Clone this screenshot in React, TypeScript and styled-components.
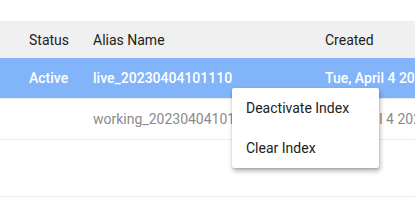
import React from "react";
import styled, { createGlobalStyle } from "styled-components";

const GlobalStyle = createGlobalStyle`
  html, body {
    margin: 0;
    padding: 0;
    background: #ffffff;
    overflow: hidden;
  }
  body {
    font-family: Roboto, "Liberation Sans", Arial, sans-serif;
    font-size: 14px;
    color: #212121;
  }
`;

const Page = styled.main`
  position: relative;
  width: 415px;
  height: 217px;
  padding-top: 21px;
  box-sizing: border-box;
  overflow: hidden;
`;

const Table = styled.div`
  width: 620px;
`;

const Row = styled.div<{ $variant?: "head" | "selected" | "muted"; $height: number }>`
  display: grid;
  grid-template-columns: 64px 232px 300px;
  align-items: center;
  padding-left: 29px;
  height: ${(p) => p.$height}px;
  box-sizing: border-box;
  white-space: nowrap;
  background: ${(p) =>
    p.$variant === "head" ? "#f0f0f0" : p.$variant === "selected" ? "#82b4fa" : "#ffffff"};
  color: ${(p) =>
    p.$variant === "selected" ? "#ffffff" : p.$variant === "muted" ? "#8a8a8a" : "#212121"};
  font-weight: ${(p) => (p.$variant === "selected" ? 500 : 400)};
  border-bottom: ${(p) => (p.$variant === "head" ? "none" : "1px solid #ebebeb")};
`;

const Cell = styled.span`
  overflow: hidden;
`;

const Menu = styled.ul`
  position: absolute;
  left: 232px;
  top: 88px;
  width: 147px;
  margin: 0;
  padding: 0;
  list-style: none;
  background: #ffffff;
  border-radius: 2px;
  box-shadow: 1px 3px 5px rgba(0, 0, 0, 0.3), 0 1px 2px rgba(0, 0, 0, 0.12);
`;

const MenuItem = styled.li`
  height: 40px;
  line-height: 40px;
  padding-left: 14px;
  color: #212121;
  font-size: 14px;
  cursor: pointer;
`;

const App = () => {
  return (
    <>
      <GlobalStyle />
      <Page>
        <Table>
          <Row $variant="head" $height={37}>
            <Cell>Status</Cell>
            <Cell>Alias Name</Cell>
            <Cell>Created</Cell>
          </Row>
          <Row $variant="selected" $height={41}>
            <Cell>Active</Cell>
            <Cell>live_20230404101110</Cell>
            <Cell>Tue, April 4 2023 10:11 AM</Cell>
          </Row>
          <Row $variant="muted" $height={41}>
            <Cell></Cell>
            <Cell>working_20230404101110</Cell>
            <Cell>Tue, April 4 2023 10:11 AM</Cell>
          </Row>
          <Row $height={57}>
            <Cell></Cell>
            <Cell></Cell>
            <Cell></Cell>
          </Row>
        </Table>
        <Menu>
          <MenuItem>Deactivate Index</MenuItem>
          <MenuItem>Clear Index</MenuItem>
        </Menu>
      </Page>
    </>
  );
};

export default App;
